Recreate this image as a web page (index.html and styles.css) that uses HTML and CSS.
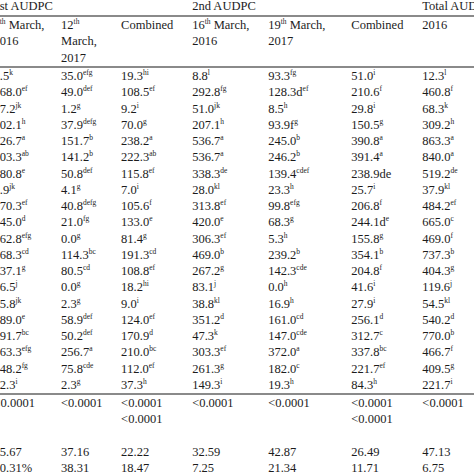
FILE: index.html
```html
<!DOCTYPE html>
<html>
<head>
<meta charset="utf-8">
<link rel="stylesheet" href="styles.css">
</head>
<body>
<div class="frame">
<table class="audpc">
  <colgroup>
    <col class="c1"><col class="c2"><col class="c3"><col class="c4"><col class="c5"><col class="c6"><col class="c7">
  </colgroup>
  <thead>
    <tr class="group">
      <th colspan="3">1st AUDPC</th>
      <th colspan="3">2nd AUDPC</th>
      <th>Total AUDPC</th>
    </tr>
    <tr class="dates">
      <th>6<sup>th</sup> March,<br>2016</th>
      <th>12<sup>th</sup><br>March,<br>2017</th>
      <th>Combined</th>
      <th>16<sup>th</sup> March,<br>2016</th>
      <th>19<sup>th</sup> March,<br>2017</th>
      <th>Combined</th>
      <th>2016</th>
    </tr>
  </thead>
  <tbody class="data">
    <tr><td>3.5<sup>k</sup></td><td>35.0<sup>efg</sup></td><td>19.3<sup>hi</sup></td><td>8.8<sup>l</sup></td><td>93.3<sup>fg</sup></td><td>51.0<sup>i</sup></td><td>12.3<sup>l</sup></td></tr>
    <tr><td>168.0<sup>ef</sup></td><td>49.0<sup>def</sup></td><td>108.5<sup>ef</sup></td><td>292.8<sup>fg</sup></td><td>128.3d<sup>ef</sup></td><td>210.6<sup>f</sup></td><td>460.8<sup>f</sup></td></tr>
    <tr><td>17.2<sup>jk</sup></td><td>1.2<sup>g</sup></td><td>9.2<sup>i</sup></td><td>51.0<sup>jk</sup></td><td>8.5<sup>h</sup></td><td>29.8<sup>i</sup></td><td>68.3<sup>k</sup></td></tr>
    <tr><td>102.1<sup>h</sup></td><td>37.9<sup>defg</sup></td><td>70.0<sup>g</sup></td><td>207.1<sup>h</sup></td><td>93.9f<sup>g</sup></td><td>150.5<sup>g</sup></td><td>309.2<sup>h</sup></td></tr>
    <tr><td>326.7<sup>a</sup></td><td>151.7<sup>b</sup></td><td>238.2<sup>a</sup></td><td>536.7<sup>a</sup></td><td>245.0<sup>b</sup></td><td>390.8<sup>a</sup></td><td>863.3<sup>a</sup></td></tr>
    <tr><td>303.3<sup>ab</sup></td><td>141.2<sup>b</sup></td><td>222.3<sup>ab</sup></td><td>536.7<sup>a</sup></td><td>246.2<sup>b</sup></td><td>391.4<sup>a</sup></td><td>840.0<sup>a</sup></td></tr>
    <tr><td>180.8<sup>e</sup></td><td>50.8<sup>def</sup></td><td>115.8<sup>ef</sup></td><td>338.3<sup>de</sup></td><td>139.4<sup>cdef</sup></td><td>238.9de</td><td>519.2<sup>de</sup></td></tr>
    <tr><td>9.9<sup>jk</sup></td><td>4.1<sup>g</sup></td><td>7.0<sup>i</sup></td><td>28.0<sup>kl</sup></td><td>23.3<sup>h</sup></td><td>25.7<sup>i</sup></td><td>37.9<sup>kl</sup></td></tr>
    <tr><td>170.3<sup>ef</sup></td><td>40.8<sup>defg</sup></td><td>105.6<sup>f</sup></td><td>313.8<sup>ef</sup></td><td>99.8<sup>efg</sup></td><td>206.8<sup>f</sup></td><td>484.2<sup>ef</sup></td></tr>
    <tr><td>245.0<sup>d</sup></td><td>21.0<sup>fg</sup></td><td>133.0<sup>e</sup></td><td>420.0<sup>e</sup></td><td>68.3<sup>g</sup></td><td>244.1d<sup>e</sup></td><td>665.0<sup>c</sup></td></tr>
    <tr><td>162.8<sup>efg</sup></td><td>0.0<sup>g</sup></td><td>81.4<sup>g</sup></td><td>306.3<sup>ef</sup></td><td>5.3<sup>h</sup></td><td>155.8<sup>g</sup></td><td>469.0<sup>f</sup></td></tr>
    <tr><td>268.3<sup>cd</sup></td><td>114.3<sup>bc</sup></td><td>191.3<sup>cd</sup></td><td>469.0<sup>b</sup></td><td>239.2<sup>b</sup></td><td>354.1<sup>b</sup></td><td>737.3<sup>b</sup></td></tr>
    <tr><td>137.1<sup>g</sup></td><td>80.5<sup>cd</sup></td><td>108.8<sup>ef</sup></td><td>267.2<sup>g</sup></td><td>142.3<sup>cde</sup></td><td>204.8<sup>f</sup></td><td>404.3<sup>g</sup></td></tr>
    <tr><td>36.5<sup>j</sup></td><td>0.0<sup>g</sup></td><td>18.2<sup>hi</sup></td><td>83.1<sup>j</sup></td><td>0.0<sup>h</sup></td><td>41.6<sup>i</sup></td><td>119.6<sup>j</sup></td></tr>
    <tr><td>15.8<sup>jk</sup></td><td>2.3<sup>g</sup></td><td>9.0<sup>i</sup></td><td>38.8<sup>kl</sup></td><td>16.9<sup>h</sup></td><td>27.9<sup>i</sup></td><td>54.5<sup>kl</sup></td></tr>
    <tr><td>189.0<sup>e</sup></td><td>58.9<sup>def</sup></td><td>124.0<sup>ef</sup></td><td>351.2<sup>d</sup></td><td>161.0<sup>cd</sup></td><td>256.1<sup>d</sup></td><td>540.2<sup>d</sup></td></tr>
    <tr><td>291.7<sup>bc</sup></td><td>50.2<sup>def</sup></td><td>170.9<sup>d</sup></td><td>47.3<sup>k</sup></td><td>147.0<sup>cde</sup></td><td>312.7<sup>c</sup></td><td>770.0<sup>b</sup></td></tr>
    <tr><td>163.3<sup>efg</sup></td><td>256.7<sup>a</sup></td><td>210.0<sup>bc</sup></td><td>303.3<sup>ef</sup></td><td>372.0<sup>a</sup></td><td>337.8<sup>bc</sup></td><td>466.7<sup>f</sup></td></tr>
    <tr><td>148.2<sup>fg</sup></td><td>75.8<sup>cde</sup></td><td>112.0<sup>ef</sup></td><td>261.3<sup>g</sup></td><td>182.0<sup>c</sup></td><td>221.7<sup>ef</sup></td><td>409.5<sup>g</sup></td></tr>
    <tr><td>72.3<sup>i</sup></td><td>2.3<sup>g</sup></td><td>37.3<sup>h</sup></td><td>149.3<sup>i</sup></td><td>19.3<sup>h</sup></td><td>84.3<sup>h</sup></td><td>221.7<sup>i</sup></td></tr>
  </tbody>
  <tbody class="stats">
    <tr><td>&lt;0.0001</td><td>&lt;0.0001</td><td>&lt;0.0001</td><td>&lt;0.0001</td><td>&lt;0.0001</td><td>&lt;0.0001</td><td>&lt;0.0001</td></tr>
    <tr><td></td><td></td><td>&lt;0.0001</td><td></td><td></td><td>&lt;0.0001</td><td></td></tr>
    <tr class="blank"><td></td><td></td><td></td><td></td><td></td><td></td><td></td></tr>
    <tr><td>35.67</td><td>37.16</td><td>22.22</td><td>32.59</td><td>42.87</td><td>26.49</td><td>47.13</td></tr>
    <tr><td>20.31%</td><td>38.31</td><td>18.47</td><td>7.25</td><td>21.34</td><td>11.71</td><td>6.75</td></tr>
  </tbody>
</table>
</div>
</body>
</html>
```
FILE: styles.css
```css
html, body {
  margin: 0;
  padding: 0;
  background: #ffffff;
  overflow: hidden;
  width: 474px;
  height: 474px;
}
.frame {
  width: 474px;
  height: 474px;
  overflow: hidden;
}
.audpc {
  margin-left: -6.5px;
  margin-top: -2px;
  border-collapse: collapse;
  table-layout: fixed;
  width: 529px;
  font-family: "Liberation Serif", "Times New Roman", serif;
  font-size: 12.5px;
  line-height: 16.5px;
  color: #1c1c1c;
}
.c1 { width: 67.5px; }
.c2 { width: 60px; }
.c3 { width: 71px; }
.c4 { width: 76px; }
.c5 { width: 83px; }
.c6 { width: 71px; }
.c7 { width: 100px; }
.audpc th,
.audpc td {
  padding: 0;
  text-align: left;
  vertical-align: top;
  font-weight: normal;
  white-space: nowrap;
}
.data,
.stats {
  line-height: 16.25px;
}
.group th {
  border-bottom: 2px solid #8a8a8a;
}
.dates th {
  border-bottom: 2px solid #8a8a8a;
}
.data tr:last-child td {
  border-bottom: 2px solid #8a8a8a;
}
.blank td {
  height: 16.25px;
}
sup {
  font-size: 7.5px;
  line-height: 0;
  vertical-align: 5px;
}
```
